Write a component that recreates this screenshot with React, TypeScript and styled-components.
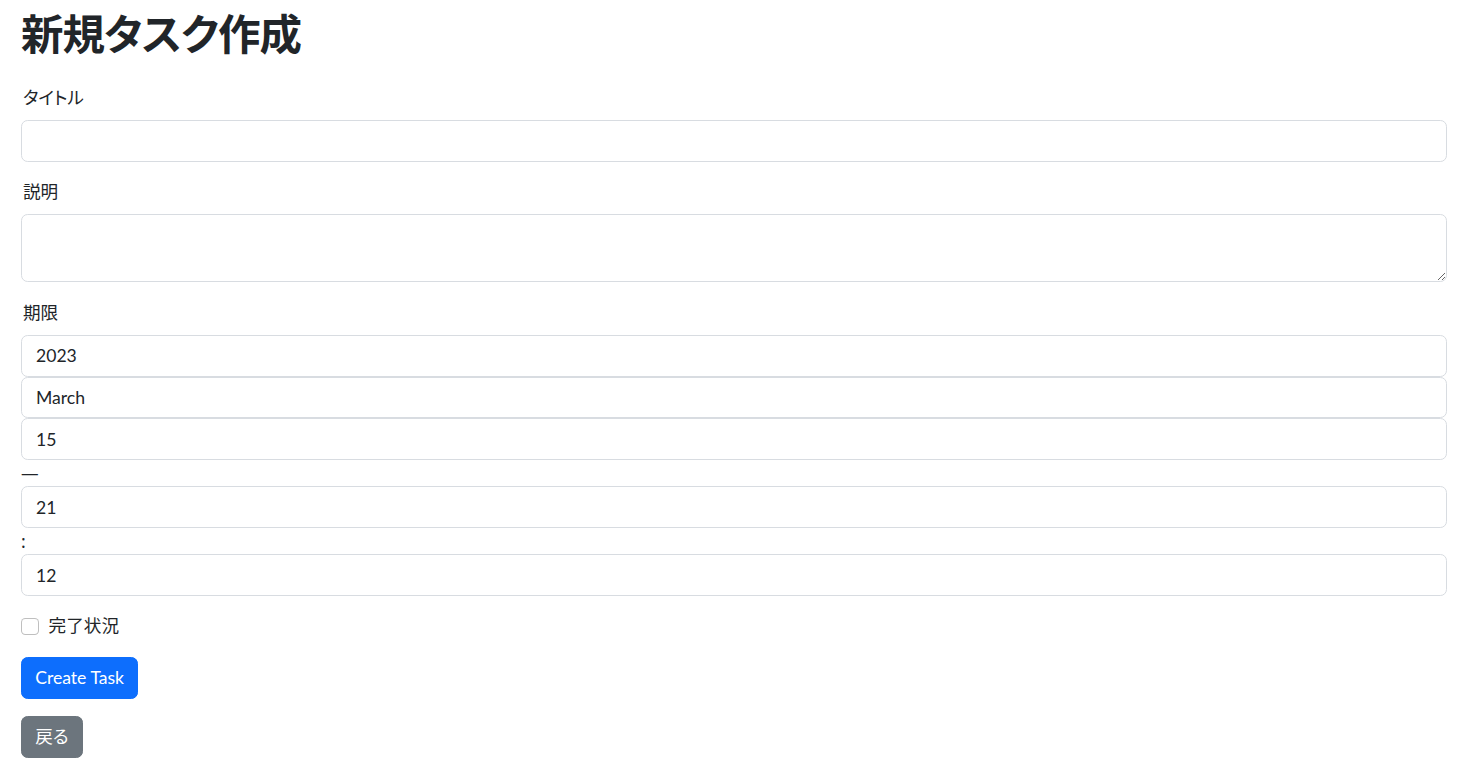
import React from 'react';
import styled, { createGlobalStyle } from 'styled-components';

const GlobalStyle = createGlobalStyle`
    * {
        box-sizing: border-box;
    }
    body {
        margin: 0;
        background: #fff;
        color: #212529;
        font-family: Lato, "Noto Sans", "Noto Sans CJK JP", sans-serif;
        font-size: 17.6px;
        line-height: 1.5;
        font-feature-settings: "palt";
    }
`;

const Page = styled.div`
    padding: 6px 30px 16px 21px;
`;

const Title = styled.h1`
    margin: 0 0 26px;
    font-size: 42.5px;
    font-weight: 700;
    line-height: 52.8px;
    letter-spacing: -1px;
    font-family: "Noto Sans CJK JP", sans-serif;
`;

const Field = styled.div`
    margin-bottom: 17.6px;
`;

const Label = styled.label`
    display: block;
    margin-bottom: 8.8px;
    padding-left: 2px;
`;

const Control = styled.input`
    display: block;
    width: 100%;
    height: 41.6px;
    padding: 6.6px 14px;
    font: inherit;
    color: #212529;
    background: #fff;
    border: 1px solid #d8dce1;
    border-radius: 6.6px;
    outline: none;
`;

const TextArea = styled.textarea`
    display: block;
    width: 100%;
    height: 68px;
    padding: 6.6px 14px;
    font: inherit;
    color: #212529;
    border: 1px solid #d8dce1;
    border-radius: 6.6px;
    outline: none;
`;

const Separator = styled.div`
    height: 26.4px;
    font-family: "Noto Sans", sans-serif;
`;

const Check = styled.div`
    display: flex;
    align-items: center;
    gap: 10px;
    min-height: 26.4px;
    margin-bottom: 17.6px;
`;

const Box = styled.input`
    appearance: none;
    width: 17.6px;
    height: 17.6px;
    margin: 0;
    border: 1px solid rgba(0, 0, 0, 0.25);
    border-radius: 4.4px;
    background: #fff;
`;

const Button = styled.button<{ $variant: 'primary' | 'secondary' }>`
    display: block;
    height: 41.6px;
    padding: 6.6px 13.2px;
    margin-bottom: 17px;
    font: inherit;
    color: #fff;
    background: ${(p) => (p.$variant === 'primary' ? '#0d6efd' : '#6c757d')};
    border: 1px solid ${(p) => (p.$variant === 'primary' ? '#0d6efd' : '#6c757d')};
    border-radius: 6.6px;
`;

const App = () => {
    return (
        <Page>
            <GlobalStyle />
            <Title>新規タスク作成</Title>
            <Field>
                <Label htmlFor="title">タイトル</Label>
                <Control id="title" type="text" />
            </Field>
            <Field>
                <Label htmlFor="description">説明</Label>
                <TextArea id="description" />
            </Field>
            <Field>
                <Label>期限</Label>
                <Control defaultValue="2023" />
                <Control defaultValue="March" />
                <Control defaultValue="15" />
                <Separator>—</Separator>
                <Control defaultValue="21" />
                <Separator>:</Separator>
                <Control defaultValue="12" />
            </Field>
            <Check>
                <Box type="checkbox" id="completed" />
                <label htmlFor="completed">完了状況</label>
            </Check>
            <Button $variant="primary">Create Task</Button>
            <Button $variant="secondary">戻る</Button>
        </Page>
    );
};

export default App;
